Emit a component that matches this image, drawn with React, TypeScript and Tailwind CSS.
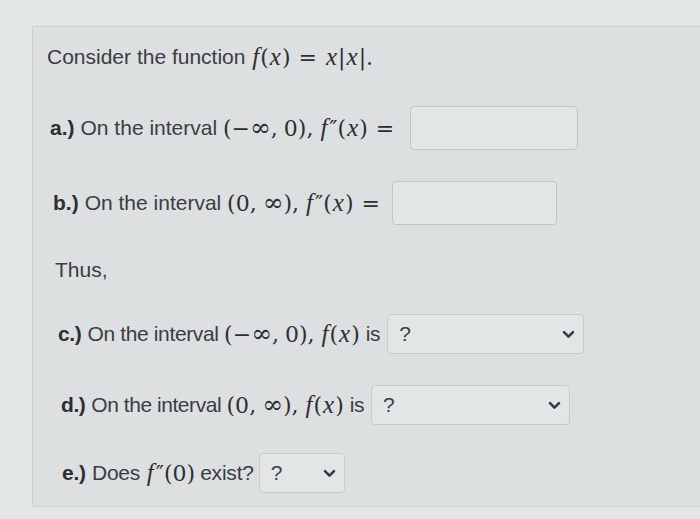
import React from "react";

const serif = { fontFamily: '"DejaVu Serif", "Liberation Serif", serif' };
const ital = { fontFamily: '"Liberation Serif", "DejaVu Serif", serif' };

function M({ children }: { children: React.ReactNode }) {
  return (
    <span className="inline-flex items-baseline text-[22px] tracking-normal text-[#2c2f33]" style={serif}>
      {children}
    </span>
  );
}

function I({ children }: { children: React.ReactNode }) {
  return (
    <i className="mx-[1px] text-[25px] italic" style={ital}>
      {children}
    </i>
  );
}

function Inf() {
  return <span className="text-[25px]">∞</span>;
}

function Eq() {
  return <span className="mx-[8px]">=</span>;
}

function Comma() {
  return <span className="mr-[6px]">,</span>;
}

function Fpp() {
  return (
    <>
      <I>f</I>
      <span className="ml-[1px]">″</span>
    </>
  );
}

function Chevron() {
  return (
    <svg width="13" height="9" viewBox="0 0 13 9" className="shrink-0">
      <path d="M2 2.2 L6.5 6.7 L11 2.2" fill="none" stroke="#383b3f" strokeWidth="2.6" strokeLinecap="round" strokeLinejoin="round" />
    </svg>
  );
}

function Box({ w }: { w: string }) {
  return <div className={`${w} h-[44px] rounded-[4px] border border-[#c3c6c7] bg-[#e3e6e6]`} />;
}

function Select({ w }: { w: string }) {
  return (
    <div className={`${w} flex h-[40px] items-center justify-between rounded-[4px] border border-[#c8cbcc] bg-[#e3e6e6] pl-[11px] pr-[8px] tracking-normal`}>
      <span className="text-[21px] text-[#3c3f43]">?</span>
      <Chevron />
    </div>
  );
}

function Label({ l }: { l: string }) {
  return <b className="mr-[6px] font-bold text-[#2c2f33]">{l}</b>;
}

export default function App() {
  return (
    <div
      className="h-[519px] w-[700px] overflow-hidden bg-[#e3e6e6] pl-[32px] pt-[26px]"
      style={{ fontFamily: '"Liberation Sans", Arial, sans-serif' }}
    >
      <div className="h-[481px] w-[700px] border border-[#cfd2d2] bg-[#dde0e0] text-[21px] text-[#3a3d41]">
        <div className="ml-[14px] mt-[8px] flex h-[44px] items-center">
          <span>Consider the function&nbsp;</span>
          <M>
            <I>f</I>(<I>x</I>)<Eq /><I>x</I>|<I>x</I>|.
          </M>
        </div>

        <div className="ml-[17px] mt-[27px] flex h-[44px] items-center">
          <Label l="a.)" />
          <span>On the interval&nbsp;</span>
          <M>
            (−<Inf /><Comma />0)<Comma /><Fpp />(<I>x</I>)<Eq />
          </M>
          <div className="ml-[8px]">
            <Box w="w-[168px]" />
          </div>
        </div>

        <div className="ml-[20px] mt-[31px] flex h-[44px] items-center">
          <Label l="b.)" />
          <span>On the interval&nbsp;</span>
          <M>
            (0<Comma /><Inf />)<Comma /><Fpp />(<I>x</I>)<Eq />
          </M>
          <div className="ml-[4px]">
            <Box w="w-[165px]" />
          </div>
        </div>

        <div className="ml-[22px] mt-[23px] flex h-[44px] items-center">
          <span>Thus,</span>
        </div>

        <div className="ml-[25px] mt-[20px] flex h-[44px] items-center tracking-[-0.36px]">
          <Label l="c.)" />
          <span>On the interval&nbsp;</span>
          <M>
            (−<Inf /><Comma />0)<Comma /><I>f</I>(<I>x</I>)
          </M>
          <span className="ml-[6px]">is</span>
          <div className="ml-[7px]">
            <Select w="w-[197px]" />
          </div>
        </div>

        <div className="ml-[28px] mt-[27px] flex h-[44px] items-center tracking-[-0.45px]">
          <Label l="d.)" />
          <span>On the interval&nbsp;</span>
          <M>
            (0<Comma /><Inf />)<Comma /><I>f</I>(<I>x</I>)
          </M>
          <span className="ml-[6px]">is</span>
          <div className="ml-[7px]">
            <Select w="w-[199px]" />
          </div>
        </div>

        <div className="ml-[29px] mt-[24px] flex h-[44px] items-center tracking-[-0.2px]">
          <Label l="e.)" />
          <span>Does&nbsp;</span>
          <M>
            <Fpp />(0)
          </M>
          <span className="ml-[5px]">exist?</span>
          <div className="ml-[5px]">
            <Select w="w-[86px]" />
          </div>
        </div>
      </div>
    </div>
  );
}
